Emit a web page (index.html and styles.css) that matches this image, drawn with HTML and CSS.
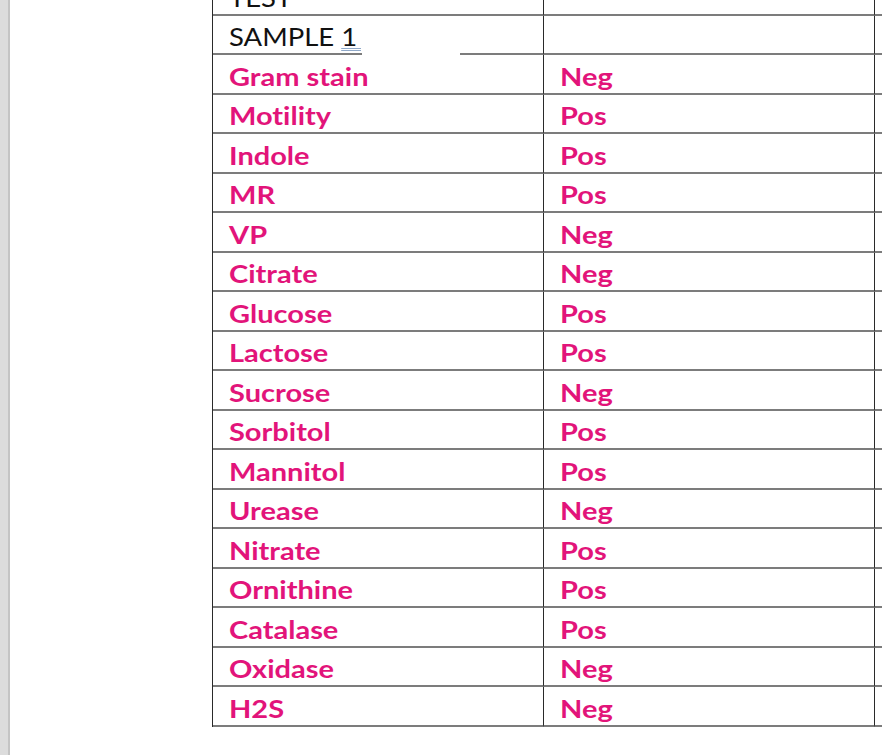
FILE: index.html
```html
<!DOCTYPE html>
<html>
<head>
<meta charset="utf-8">
<link rel="stylesheet" href="styles.css">
</head>
<body>
<div class="app">
  <div class="gutter"></div>
  <div class="gutter-edge"></div>
  <div class="page">
    <div class="sheet">
      <div class="cell plain"><span class="t">TEST</span></div><div class="cell"></div><div class="cell"></div>
      <div class="cell plain"><span class="t">SAMPLE <span class="mark">1</span></span><span class="gap"></span></div><div class="cell"></div><div class="cell"></div>
      <div class="cell res"><span class="t">Gram stain</span></div><div class="cell res"><span class="t">Neg</span></div><div class="cell"></div>
      <div class="cell res"><span class="t">Motility</span></div><div class="cell res"><span class="t">Pos</span></div><div class="cell"></div>
      <div class="cell res"><span class="t">Indole</span></div><div class="cell res"><span class="t">Pos</span></div><div class="cell"></div>
      <div class="cell res"><span class="t">MR</span></div><div class="cell res"><span class="t">Pos</span></div><div class="cell"></div>
      <div class="cell res"><span class="t">VP</span></div><div class="cell res"><span class="t">Neg</span></div><div class="cell"></div>
      <div class="cell res"><span class="t">Citrate</span></div><div class="cell res"><span class="t">Neg</span></div><div class="cell"></div>
      <div class="cell res"><span class="t">Glucose</span></div><div class="cell res"><span class="t">Pos</span></div><div class="cell"></div>
      <div class="cell res"><span class="t">Lactose</span></div><div class="cell res"><span class="t">Pos</span></div><div class="cell"></div>
      <div class="cell res"><span class="t">Sucrose</span></div><div class="cell res"><span class="t">Neg</span></div><div class="cell"></div>
      <div class="cell res"><span class="t">Sorbitol</span></div><div class="cell res"><span class="t">Pos</span></div><div class="cell"></div>
      <div class="cell res"><span class="t">Mannitol</span></div><div class="cell res"><span class="t">Pos</span></div><div class="cell"></div>
      <div class="cell res"><span class="t">Urease</span></div><div class="cell res"><span class="t">Neg</span></div><div class="cell"></div>
      <div class="cell res"><span class="t">Nitrate</span></div><div class="cell res"><span class="t">Pos</span></div><div class="cell"></div>
      <div class="cell res"><span class="t">Ornithine</span></div><div class="cell res"><span class="t">Pos</span></div><div class="cell"></div>
      <div class="cell res"><span class="t">Catalase</span></div><div class="cell res"><span class="t">Pos</span></div><div class="cell"></div>
      <div class="cell res"><span class="t">Oxidase</span></div><div class="cell res"><span class="t">Neg</span></div><div class="cell"></div>
      <div class="cell res"><span class="t">H2S</span></div><div class="cell res"><span class="t">Neg</span></div><div class="cell"></div>
    </div>
  </div>
</div>
</body>
</html>
```

FILE: styles.css
```css
html, body {
  margin: 0;
  padding: 0;
  background: #ffffff;
}

.app {
  display: flex;
  width: 882px;
  height: 755px;
  overflow: hidden;
}

.gutter {
  flex: 0 0 8px;
  background: #dcdcdc;
}

.gutter-edge {
  flex: 0 0 2px;
  background: #c4c4c4;
}

.page {
  flex: 1;
  overflow: hidden;
  padding-left: 202px;
  background: #ffffff;
}

.sheet {
  display: grid;
  grid-template-columns: 330px 331px 331px;
  grid-auto-rows: 39.5px;
  width: 993px;
  margin-top: -24px;
  border-left: 1px solid #2a2a2a;
}

.cell {
  box-sizing: border-box;
  position: relative;
  border-bottom: 2px solid #7c7c7c;
  padding-left: 16px;
  padding-top: 5.5px;
  font-family: "Lato", "Open Sans", sans-serif;
  font-size: 25px;
  line-height: 30px;
  white-space: nowrap;
  font-variant-ligatures: none;
  font-feature-settings: "liga" 0, "clig" 0;
}

.cell + .cell {
  border-left: 1px solid #2a2a2a;
}

.cell:nth-child(3n+1) {
  border-left: none;
}

.t {
  display: inline-block;
  transform-origin: left center;
}

.plain {
  color: #111111;
  font-weight: 400;
}

.plain .t {
  transform: scaleX(1.1);
}

.res {
  color: #e2147a;
  font-weight: 700;
}

.res .t {
  transform: scaleX(1.16);
}

.mark {
  display: inline-block;
  line-height: 23px;
  border-bottom: 3px double #8fa8c8;
  padding-right: 3px;
}

.gap {
  position: absolute;
  left: 149px;
  bottom: -2px;
  width: 98px;
  height: 2px;
  background: #ffffff;
}
```
